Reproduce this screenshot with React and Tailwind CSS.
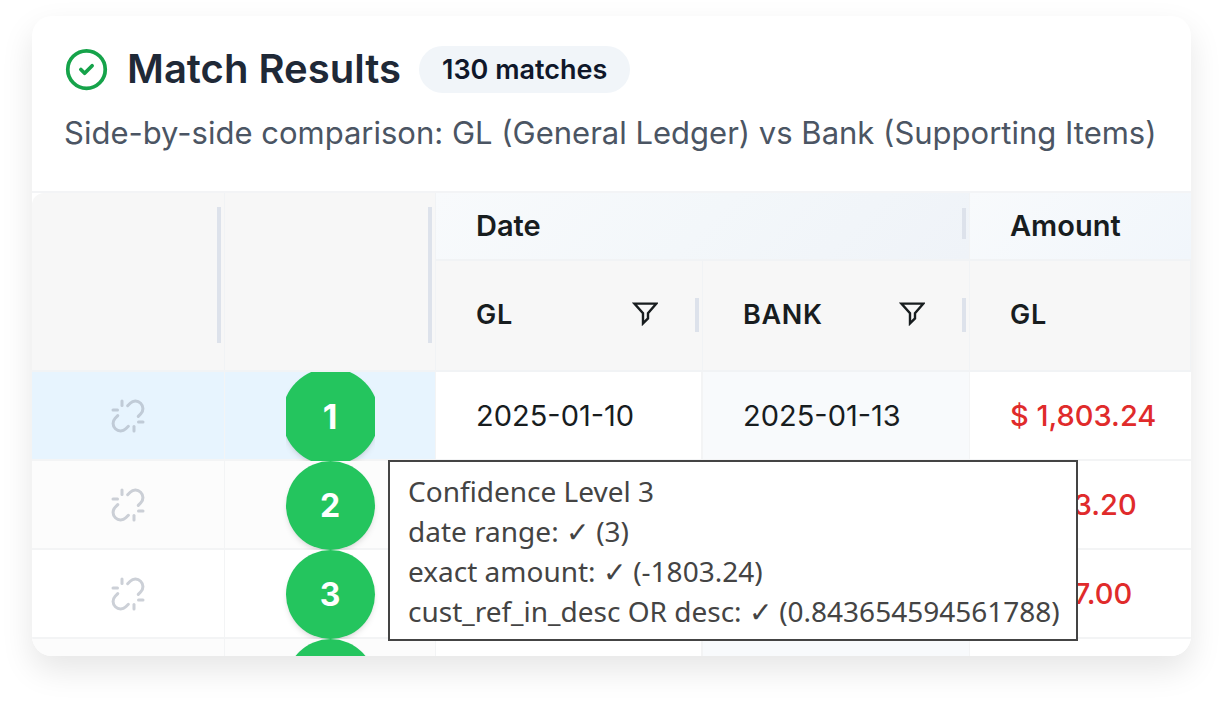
import { CircleCheck, Unlink } from "lucide-react";

const rows = [
    { id: 1, gl: "2025-01-10", bank: "2025-01-13", amount: "$ 1,803.24" },
    { id: 2, gl: "", bank: "", amount: "$ 483.20" },
    { id: 3, gl: "", bank: "", amount: "$ 847.00" },
    { id: 4, gl: "", bank: "", amount: "" },
];

const confidence = [
    "Confidence Level 3",
    "date range: ✓ (3)",
    "exact amount: ✓ (-1803.24)",
    "cust_ref_in_desc OR desc: ✓ (0.843654594561788)",
];

function FilterIcon() {
    return (
        <svg width="26" height="24" viewBox="0 0 26 24" fill="none" stroke="currentColor" strokeWidth="2.4">
            <path d="M2.4 1.6H24.4L16 11.2V16.4L11 21.4V11.2Z" />
        </svg>
    );
}

function ResizeHandle({ className }) {
    return <span className={`absolute right-[3px] w-1 bg-[#dde2eb] ${className}`} />;
}

function SubHeader({ label, filter }) {
    return (
        <th scope="col" className="relative h-[111px] border-r border-b-2 border-[#f1f3f5] bg-[#f7f7f7] px-10 py-0 text-left">
            <div className="flex items-center justify-between">
                <span className="text-[27px] font-semibold tracking-wide">{label}</span>
                {filter && (
                    <button type="button" aria-label={`Filter ${label}`} className="mr-1 pb-1">
                        <FilterIcon />
                    </button>
                )}
            </div>
            {filter && <ResizeHandle className="top-[37px] h-[34px]" />}
        </th>
    );
}

function Tooltip() {
    return (
        <div
            role="tooltip"
            className="absolute top-[88px] left-[163px] z-20 border-2 border-[#444] bg-white pt-[9px] pr-4 pb-[8px] pl-[18px] text-left font-['Noto_Sans',sans-serif] text-[28px] leading-[40px] whitespace-nowrap text-[#444]"
        >
            {confidence.map((line) => (
                <div key={line}>{line}</div>
            ))}
        </div>
    );
}

function MatchRow({ row, active }) {
    const stripe = row.id % 2 === 0 ? "bg-[#fcfcfc]" : "bg-white";
    const actionBg = active ? "bg-[#e7f4fe]" : stripe;

    return (
        <tr className="h-[89px]">
            <td className={`border-r border-b-2 border-[#f3f4f5] p-0 ${actionBg}`}>
                <button type="button" aria-label={`Unlink match ${row.id}`} className="mx-auto block text-gray-400/50">
                    <Unlink size={36} />
                </button>
            </td>
            <td className={`relative border-r border-b-2 border-[#f3f4f5] p-0 ${actionBg}`}>
                <div className={`mx-auto -mb-0.5 flex h-[89px] w-[89px] items-center justify-center ${active ? "overflow-hidden" : ""}`}>
                    <span
                        className={`flex shrink-0 items-center justify-center rounded-full bg-[#24c55e] font-bold text-white shadow-md ${active ? "h-[97px] w-[97px] text-[34px]" : "h-[89px] w-[89px] text-[32px]"}`}
                    >
                        {row.id}
                    </span>
                </div>
                {active && <Tooltip />}
            </td>
            <td className="border-r-2 border-b-2 border-[#f3f4f5] bg-white px-10 py-0">{row.gl}</td>
            <td className="border-r border-b-2 border-[#f3f4f5] bg-[#f8fafc] px-10 py-0">{row.bank}</td>
            <td className="border-b-2 border-[#f3f4f5] bg-white px-10 py-0 font-medium whitespace-nowrap text-[#e02b2b]">
                {row.amount}
            </td>
        </tr>
    );
}

export default function App() {
    return (
        <div className="flex h-screen flex-col bg-white px-8 pt-4 pb-12 font-['Inter',sans-serif]">
            <section className="min-h-0 flex-1 overflow-hidden rounded-[20px] bg-white shadow-[0_14px_32px_rgba(0,0,0,0.1)]">
                {/* Header */}
                <header className="border-b-2 border-[#f3f4f6] px-8 pt-[29px] pb-[35px]">
                    <div className="flex items-center gap-[18px]">
                        <div className="flex items-center gap-[18px]">
                            <CircleCheck size={45} className="text-[#16a34a]" />
                            <h1 className="text-[40px] leading-[48px] font-semibold text-[#1f2937]">Match Results</h1>
                        </div>
                        <span className="rounded-full bg-[#f1f5f9] px-[23px] py-1 text-[27px] leading-[39px] font-semibold text-[#0f172a]">
                            130 matches
                        </span>
                    </div>
                    <p className="mt-[17px] text-[31px] leading-[46px] whitespace-nowrap text-[#4b5563]">
                        Side-by-side comparison: GL (General Ledger) vs Bank (Supporting Items)
                    </p>
                </header>

                {/* Matches grid */}
                <table className="w-full table-fixed border-separate border-spacing-0 text-[29px] text-[#181d1f]">
                    <colgroup>
                        <col className="w-[193px]" />
                        <col className="w-[211px]" />
                        <col className="w-[267px]" />
                        <col className="w-[267px]" />
                        <col />
                    </colgroup>
                    <thead>
                        <tr>
                            <th rowSpan={2} aria-label="Actions" className="relative rounded-tl-[12px] border-r border-b-2 border-[#f1f3f5] bg-[#f7f7f7]">
                                <ResizeHandle className="top-[14px] h-[136px]" />
                            </th>
                            <th rowSpan={2} aria-label="Match" className="relative border-r border-b-2 border-[#f1f3f5] bg-[#f7f7f7]">
                                <ResizeHandle className="top-[14px] h-[136px]" />
                            </th>
                            <th
                                colSpan={2}
                                scope="colgroup"
                                className="relative h-[68px] border-r border-b-2 border-[#f1f3f5] bg-linear-135 from-[#f8fafc] via-[#f3f7fa] to-[#eff3f8] px-10 py-0 text-left font-semibold"
                            >
                                Date
                                <ResizeHandle className="top-[15px] h-[31px]" />
                            </th>
                            <th
                                scope="colgroup"
                                className="h-[68px] border-b-2 border-[#f1f3f5] bg-linear-135 from-[#f8fafc] to-[#f1f6fb] px-10 py-0 text-left font-semibold"
                            >
                                Amount
                            </th>
                        </tr>
                        <tr>
                            <SubHeader label="GL" filter />
                            <SubHeader label="BANK" filter />
                            <SubHeader label="GL" />
                        </tr>
                    </thead>
                    <tbody>
                        {rows.map((row) => (
                            <MatchRow key={row.id} row={row} active={row.id === 1} />
                        ))}
                    </tbody>
                </table>
            </section>
        </div>
    );
}
